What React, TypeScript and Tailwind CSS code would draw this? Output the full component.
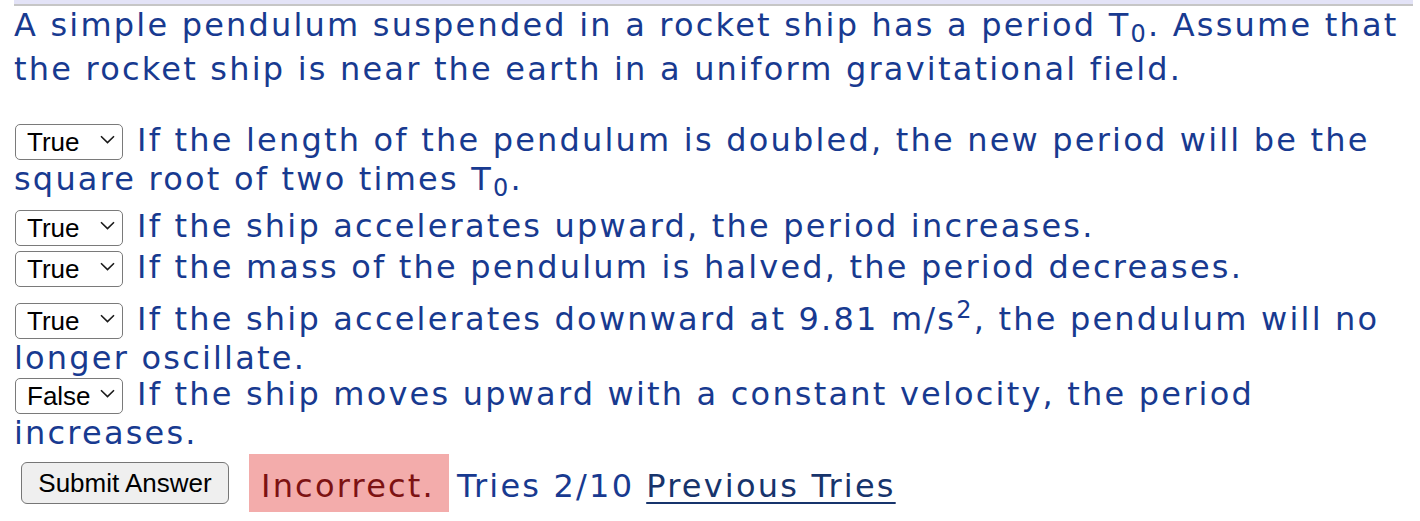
import { useState } from 'react';

const statements = [
  { id: 'a', value: 'True', gap: 'mt-[30px]', text: <>If the length of the pendulum is doubled, the new period will be the square root of two times T<sub className="text-[75%]">0</sub>.</> },
  { id: 'b', value: 'True', gap: 'mt-[8px]', text: <>If the ship accelerates upward, the period increases.</> },
  { id: 'c', value: 'True', gap: 'mt-[2px]', text: <>If the mass of the pendulum is halved, the period decreases.</> },
  { id: 'd', value: 'True', gap: 'mt-[13px]', text: <>If the ship accelerates downward at 9.81 m/s<sup className="text-[75%]">2</sup>, the pendulum will no longer oscillate.</> },
  { id: 'e', value: 'False', gap: '-mt-[3px]', text: <>If the ship moves upward with a constant velocity, the period increases.</> },
];

function Choice({ value }: { value: string }) {
  const [v, setV] = useState(value);
  return (
    <span className="relative inline-block ml-[1px] mr-[14px] align-baseline tracking-normal">
      <select
        value={v}
        onChange={(e) => setV(e.target.value)}
        className="appearance-none w-[108px] h-[36px] pl-[11px] pr-[28px] bg-white text-black border-[1.5px] border-[#7a7a7a] rounded-[5px] font-['Liberation_Sans',Arial,sans-serif] text-[26px] leading-none"
      >
        <option value="True">True</option>
        <option value="False">False</option>
      </select>
      <svg className="pointer-events-none absolute right-[8px] top-[14px]" width="15" height="9" viewBox="0 0 15 9" fill="none">
        <path d="M1 1.2 L7.5 7.6 L14 1.2" stroke="#1a1a1a" strokeWidth="1.6" />
      </svg>
    </span>
  );
}

export default function App() {
  return (
    <div className="pl-[14px] pr-[7px] bg-white font-['DejaVu_Sans',Verdana,sans-serif] text-[32px] tracking-[2.2px] text-[#183a90]">
      <div className="h-[4px] bg-[#e3e3f7]" />
      <div className="h-[2px] bg-[#c6c6c6]" />

      <p className="-mt-[3px] leading-[44px]">
        A simple pendulum suspended in a rocket ship has a period T<sub className="text-[75%]">0</sub>. Assume that the rocket ship is near the earth in a uniform gravitational field.
      </p>

      {statements.map((s) => (
        <div key={s.id} className={`${s.gap} leading-[39px]`}>
          <Choice value={s.value} />
          {s.text}
        </div>
      ))}

      <div className="flex items-center h-[58px] mt-[1px]">
        <button className="ml-[7px] w-[208px] h-[42px] bg-[#efefef] border-[1.5px] border-[#767676] rounded-[6px] text-black font-['Liberation_Sans',Arial,sans-serif] text-[26px] tracking-normal">
          Submit Answer
        </button>
        <span className="ml-[20px] h-[58px] flex items-center pt-[6px] pl-[12px] pr-[14px] bg-[#f3acab] text-[#7d1212]">
          Incorrect.
        </span>
        <span className="ml-[8px] pt-[6px]">Tries 2/10</span>
        <a href="#" className="ml-[12px] pt-[6px] text-[#17346c] underline decoration-2 underline-offset-[5px]">Previous Tries</a>
      </div>
    </div>
  );
}
